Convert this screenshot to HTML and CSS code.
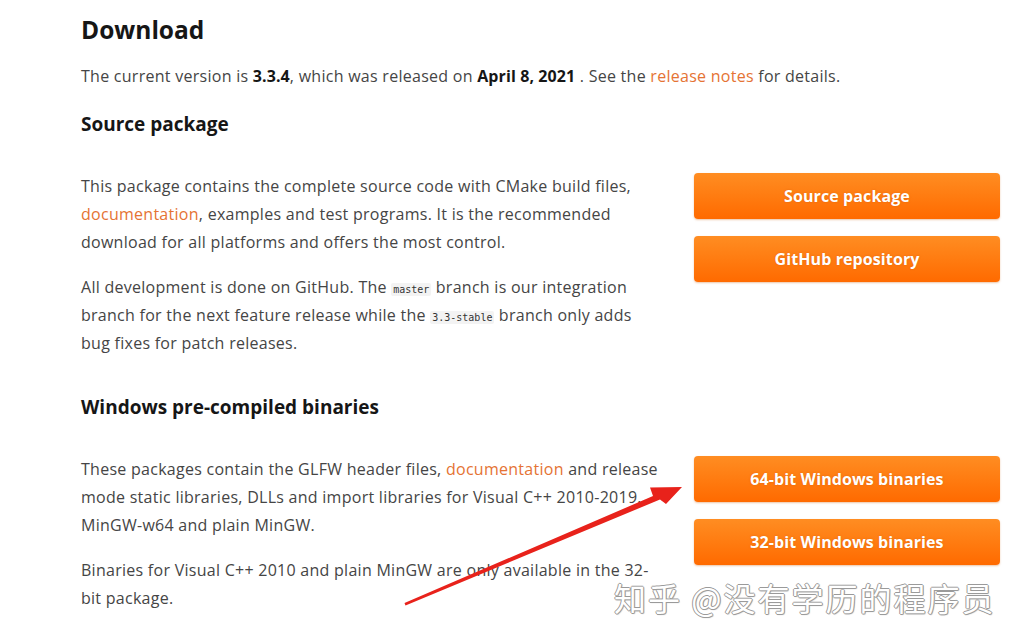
FILE: index.html
```html
<!DOCTYPE html>
<html lang="en">
<head>
<meta charset="utf-8">
<title>Download</title>
<link rel="stylesheet" href="styles.css">
</head>
<body>
<main class="page">
  <h1 class="title">Download</h1>
  <p class="lead">The current version is <b>3.3.4</b>, which was released on <b>April 8, 2021</b> . See the <a href="#">release notes</a> for details.</p>

  <h3 class="section-title">Source package</h3>
  <div class="row">
    <div class="text">
      <p>This package contains the complete source code with CMake build files, <a href="#">documentation</a>, examples and test programs. It is the recommended download for all platforms and offers the most control.</p>
      <p>All development is done on GitHub. The <code>master</code> branch is our integration branch for the next feature release while the <code>3.3-stable</code> branch only adds bug fixes for patch releases.</p>
    </div>
    <div class="buttons">
      <a class="btn" href="#">Source package</a>
      <a class="btn" href="#">GitHub repository</a>
    </div>
  </div>

  <h3 class="section-title">Windows pre-compiled binaries</h3>
  <div class="row">
    <div class="text">
      <p>These packages contain the GLFW header files, <a href="#">documentation</a> and release mode static libraries, DLLs and import libraries for Visual C++ 2010-2019, MinGW-w64 and plain MinGW.</p>
      <p>Binaries for Visual C++ 2010 and plain MinGW are only available in the 32-bit package.</p>
    </div>
    <div class="buttons">
      <a class="btn" href="#">64-bit Windows binaries</a>
      <a class="btn" href="#">32-bit Windows binaries</a>
    </div>
  </div>
</main>

<div class="watermark">知乎 @没有学历的程序员</div>

<svg class="arrow" width="1019" height="638" viewBox="0 0 1019 638" aria-hidden="true">
  <polygon fill="#e8221b" points="404.5,603 653,496 650,487.5 682,487 666,504 660,499.5 405.5,605.5"/>
</svg>
</body>
</html>
```

FILE: styles.css
```css
html, body {
  margin: 0;
  padding: 0;
  background: #ffffff;
}

body {
  width: 1019px;
  height: 638px;
  overflow: hidden;
  position: relative;
  font-family: "Open Sans", "Noto Sans CJK SC", sans-serif;
  font-size: 16px;
  line-height: 28px;
  color: #454545;
}

.page {
  padding: 14px 0 0 81px;
}

.title {
  margin: 0;
  font-size: 24.5px;
  line-height: 31px;
  font-weight: 700;
  color: #161616;
}

.lead {
  margin: 17px 0 0 0;
  letter-spacing: 0.27px;
  white-space: nowrap;
}

.lead b {
  color: #161616;
  font-weight: 700;
  letter-spacing: 0.1px;
}

a {
  color: #e57334;
  text-decoration: none;
}

.section-title {
  margin: 20px 0 0 0;
  font-size: 19px;
  line-height: 28px;
  font-weight: 700;
  color: #161616;
}

.row {
  display: grid;
  grid-template-columns: 580px 306px;
  column-gap: 33px;
  align-items: start;
  margin-top: 34px;
}

.text p {
  margin: 0 0 17px 0;
  letter-spacing: 0.27px;
}

.text p:last-child {
  margin-bottom: 0;
}

code {
  font-family: "DejaVu Sans Mono", monospace;
  font-size: 10px;
  line-height: 1;
  letter-spacing: 0;
  background: #f3f3f3;
  color: #333;
  padding: 1px 2px;
  border-radius: 2px;
}

.row + .section-title {
  margin-top: 36px;
}

.buttons {
  display: flex;
  flex-direction: column;
  gap: 17px;
  padding-top: 1px;
}

.btn {
  display: flex;
  align-items: center;
  justify-content: center;
  height: 46px;
  border-radius: 4px;
  background: linear-gradient(to bottom, #ff8d22 0%, #ff7a0f 55%, #ff6a00 100%);
  box-shadow: 0 1px 2px rgba(200, 90, 0, 0.35);
  color: #ffffff;
  font-size: 16px;
  font-weight: 700;
  letter-spacing: 0.1px;
  text-shadow: 0 0 2px rgba(170, 70, 0, 0.35);
}

.watermark {
  position: absolute;
  left: 614px;
  top: 577px;
  font-family: "Noto Sans CJK SC", sans-serif;
  font-size: 32px;
  line-height: 40px;
  color: #ffffff;
  letter-spacing: 2px;
  text-shadow:
    1px 0 0 #9a9a9a, -1px 0 0 #9a9a9a, 0 1px 0 #9a9a9a, 0 -1px 0 #9a9a9a,
    1px 1px 1px #b0b0b0;
}

.arrow {
  position: absolute;
  left: 0;
  top: 0;
  pointer-events: none;
}
```
